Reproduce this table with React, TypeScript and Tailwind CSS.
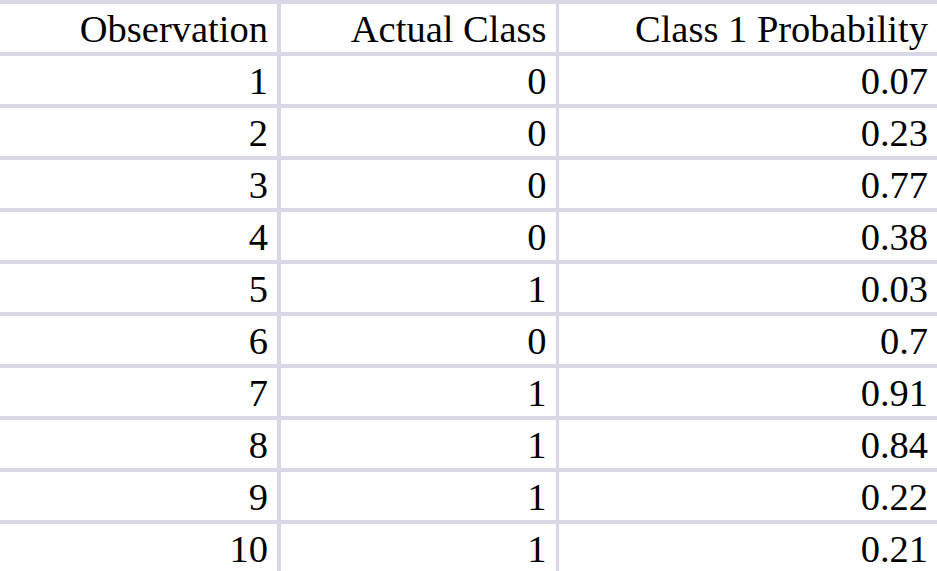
const rows: [number, number, string][] = [
  [1, 0, "0.07"],
  [2, 0, "0.23"],
  [3, 0, "0.77"],
  [4, 0, "0.38"],
  [5, 1, "0.03"],
  [6, 0, "0.7"],
  [7, 1, "0.91"],
  [8, 1, "0.84"],
  [9, 1, "0.22"],
  [10, 1, "0.21"],
];

function Cell({ children }: { children: React.ReactNode }) {
  return (
    <div className="bg-white flex items-center justify-end pr-[9px] pt-[2px] whitespace-nowrap">
      {children}
    </div>
  );
}

export default function App() {
  return (
    <div className="w-[937px] h-[571px] overflow-hidden bg-[#d8d8e6] pt-[3.5px] text-black text-[38.5px] leading-[1.15] [font-family:'Liberation_Serif',serif]">
      <div className="grid grid-cols-[277px_275px_378px] auto-rows-[48.5px] gap-[3.5px]">
        <Cell>Observation</Cell>
        <Cell>Actual Class</Cell>
        <Cell>Class 1 Probability</Cell>
        {rows.map(([obs, actual, prob]) => (
          <div key={obs} className="contents">
            <Cell>{obs}</Cell>
            <Cell>{actual}</Cell>
            <Cell>{prob}</Cell>
          </div>
        ))}
      </div>
    </div>
  );
}
